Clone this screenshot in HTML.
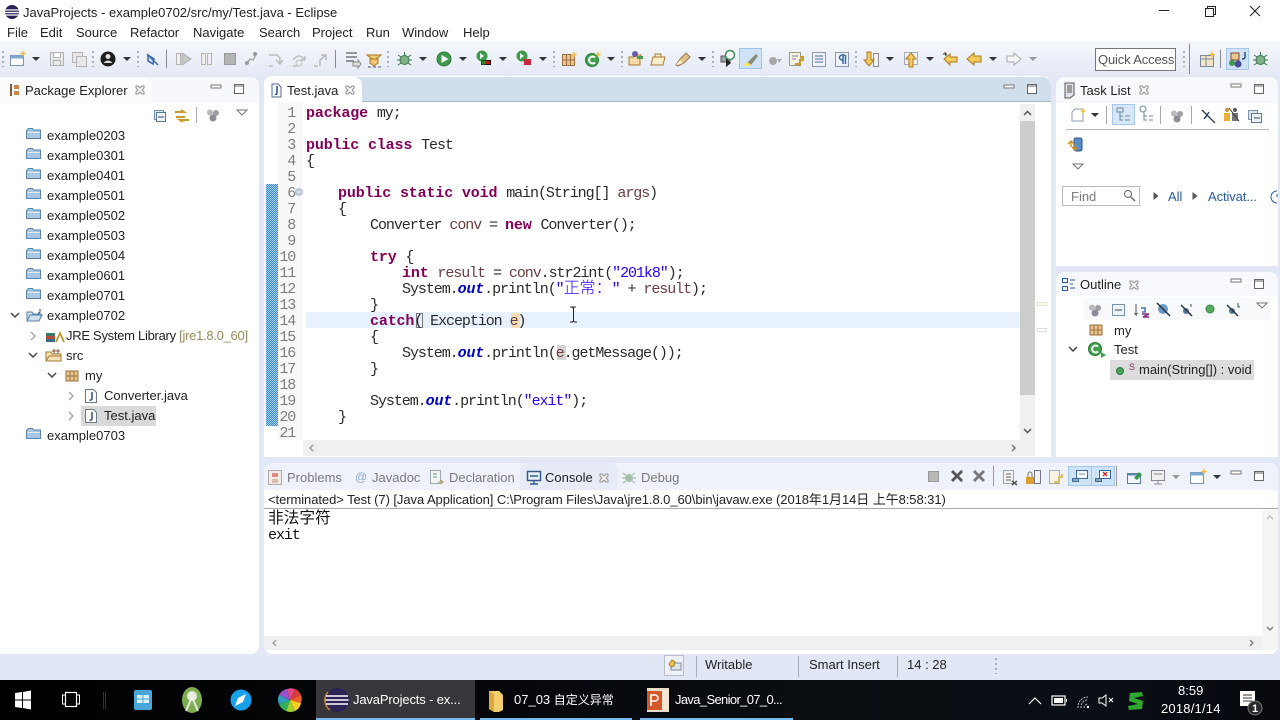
<!DOCTYPE html>
<html><head><meta charset="utf-8"><title>Eclipse</title>
<style>
html,body{margin:0;padding:0}
body{width:1280px;height:720px;overflow:hidden;position:relative;background:#e1e7f5;font:13px/20px "Liberation Sans","Noto Sans CJK SC",sans-serif;color:#222}
div{position:absolute}
.t{white-space:nowrap;margin-top:1px}
.g{color:#7a7a7a}
.w{color:#fff}
.c{font:15px/16px "Liberation Mono","Noto Sans CJK SC",monospace;letter-spacing:-1.06px;white-space:pre;color:#2a2a2a;margin-top:1px}
.c b{color:#7f0055;letter-spacing:-.15px}
.c i{color:#0000c0;font-weight:bold;letter-spacing:-.15px}
.c s{color:#2a00ff;text-decoration:none}
.c s span{font:16px/0 "Noto Sans CJK SC",sans-serif;letter-spacing:0;font-weight:300}
.c u{color:#6a3e3e;text-decoration:none}
.n{font:15px/16px "Liberation Mono",monospace;color:#7d7d7d;left:270px;width:25px;text-align:right;letter-spacing:-1.2px;margin-top:1px}
svg{position:absolute;left:0;top:0}
</style></head><body>
<div style="left:0;top:0;width:1280px;height:41px;background:#fff"></div>
<div style="left:0;top:41px;width:1280px;height:35px;background:linear-gradient(#f5f7fc,#e4e9f5)"></div>
<div style="left:0;top:77px;width:259px;height:577px;background:#fff;border-radius:0 8px 8px 0"></div>
<div style="left:0;top:77px;width:259px;height:26px;background:#f7f8fc;border-radius:0 8px 0 0"></div>
<div style="left:0;top:77px;width:152px;height:26px;background:#fbfbfe;border-radius:0 8px 0 0"></div>
<div style="left:264px;top:76px;width:787px;height:381px;background:#fff;border-radius:8px 8px 0 0"></div>
<div style="left:264px;top:77px;width:787px;height:24px;background:#d1deec;border-radius:8px 8px 0 0;border-bottom:1px solid #b0b8c2"></div>
<div style="left:264px;top:77px;width:98px;height:25px;background:#fff;border-radius:6px 8px 0 0"></div>
<div style="left:278px;top:102px;width:25px;height:338px;background:#f8f8f8"></div>
<div style="left:306px;top:312px;width:714px;height:16px;background:#e8f2fe"></div>
<div style="left:1020px;top:104px;width:15px;height:336px;background:#f0f0f0"></div>
<div style="left:1020px;top:121px;width:15px;height:274px;background:#cdcdcd"></div>
<div style="left:303px;top:440px;width:732px;height:16px;background:#f0f0f0"></div>
<div style="left:1056px;top:77px;width:222px;height:189px;background:#fff;border-radius:8px 8px 0 0"></div>
<div style="left:1056px;top:77px;width:222px;height:26px;background:#f8f9fc;border-radius:8px 8px 0 0"></div>
<div style="left:1056px;top:272px;width:222px;height:185px;background:#fff;border-radius:8px 8px 0 0"></div>
<div style="left:1056px;top:272px;width:222px;height:24px;background:#f8f9fc;border-radius:8px 8px 0 0"></div>
<div style="left:1084px;top:298px;width:186px;height:22px;background:#f8f9fb"></div>
<div style="left:1110px;top:360px;width:144px;height:20px;background:#dcdcdc"></div>
<div style="left:264px;top:463px;width:1014px;height:191px;background:#fff;border-radius:8px 8px 8px 8px"></div>
<div style="left:264px;top:463px;width:1014px;height:27px;background:#eff2fa;border-radius:8px 8px 0 0"></div>
<div style="left:520px;top:463px;width:98px;height:27px;background:#e6ebf5;border-radius:8px 8px 0 0"></div>
<div style="left:264px;top:508px;width:1014px;height:1px;background:#a8a8a8"></div>
<div style="left:1262px;top:510px;width:16px;height:140px;background:#f5f5f5"></div>
<div style="left:264px;top:636px;width:998px;height:14px;background:#f0f0f0"></div>
<div style="left:81px;top:406px;width:75px;height:20px;background:#d9d9d9"></div>
<div style="left:0;top:680px;width:1280px;height:40px;background:linear-gradient(90deg,#000 0,#05070b 40%,#0b0f14 70%,#0a0f16 85%,#06080d 100%)"></div>
<div style="left:316px;top:680px;width:159px;height:40px;background:#37373b"></div>
<div style="left:316px;top:718px;width:159px;height:2px;background:#76b9ed"></div>
<div style="left:480px;top:718px;width:152px;height:2px;background:#76b9ed"></div>
<div style="left:640px;top:718px;width:153px;height:2px;background:#76b9ed"></div>

<!-- title and menu -->
<div class="t" style="left:23px;top:2px">JavaProjects - example0702/src/my/Test.java - Eclipse</div>
<div class="t" style="left:7px;top:22px">File</div><div class="t" style="left:40px;top:22px">Edit</div><div class="t" style="left:76px;top:22px">Source</div><div class="t" style="left:130px;top:22px">Refactor</div><div class="t" style="left:193px;top:22px">Navigate</div><div class="t" style="left:259px;top:22px">Search</div><div class="t" style="left:312px;top:22px">Project</div><div class="t" style="left:366px;top:22px">Run</div><div class="t" style="left:402px;top:22px">Window</div><div class="t" style="left:463px;top:22px">Help</div>
<div style="left:1095px;top:48px;width:79px;height:21px;border:1px solid #777;background:#fff;color:#555;text-indent:2px;line-height:21px;white-space:nowrap;letter-spacing:-.15px">Quick Access</div>

<!-- tree -->
<div class="t" style="left:25px;top:80px">Package Explorer</div>
<div class="t" style="left:47px;top:125px">example0203</div>
<div class="t" style="left:47px;top:145px">example0301</div>
<div class="t" style="left:47px;top:165px">example0401</div>
<div class="t" style="left:47px;top:185px">example0501</div>
<div class="t" style="left:47px;top:205px">example0502</div>
<div class="t" style="left:47px;top:225px">example0503</div>
<div class="t" style="left:47px;top:245px">example0504</div>
<div class="t" style="left:47px;top:265px">example0601</div>
<div class="t" style="left:47px;top:285px">example0701</div>
<div class="t" style="left:47px;top:305px">example0702</div>
<div class="t" style="left:66px;top:325px;letter-spacing:-.28px">JRE System Library <span style="color:#968b5c">[jre1.8.0_60]</span></div>
<div class="t" style="left:66px;top:345px">src</div>
<div class="t" style="left:85px;top:365px">my</div>
<div class="t" style="left:104px;top:385px">Converter.java</div>
<div class="t" style="left:104px;top:405px">Test.java</div>
<div class="t" style="left:47px;top:425px">example0703</div>

<!-- editor -->
<div class="t" style="left:287px;top:80px">Test.java</div>
<div class="n" style="top:105px">1</div><div class="n" style="top:121px">2</div><div class="n" style="top:137px">3</div><div class="n" style="top:153px">4</div><div class="n" style="top:169px">5</div><div class="n" style="top:185px">6</div><div class="n" style="top:201px">7</div><div class="n" style="top:217px">8</div><div class="n" style="top:233px">9</div><div class="n" style="top:249px">10</div><div class="n" style="top:265px">11</div><div class="n" style="top:281px">12</div><div class="n" style="top:297px">13</div><div class="n" style="top:313px">14</div><div class="n" style="top:329px">15</div><div class="n" style="top:345px">16</div><div class="n" style="top:361px">17</div><div class="n" style="top:377px">18</div><div class="n" style="top:393px">19</div><div class="n" style="top:409px">20</div><div class="n" style="top:425px">21</div>
<div style="left:511px;top:313px;width:9px;height:15px;background:#f6deb6"></div>
<div style="left:557px;top:345px;width:9px;height:15px;background:#d4d4d4"></div>
<div style="left:416px;top:313px;width:7px;height:15px;border:1px solid #777;box-sizing:border-box"></div>
<div class="c" style="left:306px;top:105px"><b>package </b>my;</div>
<div class="c" style="left:306px;top:137px"><b>public class </b>Test</div>
<div class="c" style="left:306px;top:153px">{</div>
<div class="c" style="left:338px;top:185px"><b>public static void </b>main(String[] <u>args</u>)</div>
<div class="c" style="left:338px;top:201px">{</div>
<div class="c" style="left:370px;top:217px">Converter <u>conv</u> = <b>new </b>Converter();</div>
<div class="c" style="left:370px;top:249px"><b>try </b>{</div>
<div class="c" style="left:402px;top:265px"><b>int </b><u>result</u> = <u>conv</u>.str2int(<s>"201k8"</s>);</div>
<div class="c" style="left:402px;top:281px">System.<i>out</i>.println(<s>"<span>正常：</span>"</s> + <u>result</u>);</div>
<div class="c" style="left:370px;top:297px">}</div>
<div class="c" style="left:370px;top:313px"><b>catch</b>( Exception <u>e</u>)</div>
<div class="c" style="left:370px;top:329px">{</div>
<div class="c" style="left:402px;top:345px">System.<i>out</i>.println(<u>e</u>.getMessage());</div>
<div class="c" style="left:370px;top:361px">}</div>
<div class="c" style="left:370px;top:393px">System.<i>out</i>.println(<s>"exit"</s>);</div>
<div class="c" style="left:338px;top:409px">}</div>

<!-- right panels -->
<div class="t" style="left:1080px;top:80px">Task List</div>
<div class="t g" style="left:1071px;top:186px">Find</div>
<div class="t" style="left:1168px;top:186px;color:#2a5a9c">All</div>
<div class="t" style="left:1208px;top:186px;color:#2a5a9c;letter-spacing:-.1px">Activat...</div>
<div class="t" style="left:1080px;top:274px">Outline</div>
<div class="t" style="left:1114px;top:320px">my</div>
<div class="t" style="left:1114px;top:339px">Test</div>
<div class="t" style="left:1139px;top:359px">main(String[]) : void</div>
<div class="t" style="left:1129px;top:356px;font-size:9px;color:#8a2a5a">S</div>

<!-- console -->
<div class="t g" style="left:287px;top:467px">Problems</div>
<div class="t" style="left:355px;top:466px;color:#8fa8c8;font-size:12px">@</div>
<div class="t g" style="left:372px;top:467px">Javadoc</div>
<div class="t g" style="left:449px;top:467px">Declaration</div>
<div class="t" style="left:545px;top:467px">Console</div>
<div class="t g" style="left:641px;top:467px">Debug</div>
<div class="t" style="left:268px;top:489px;letter-spacing:-.07px">&lt;terminated&gt; Test (7) [Java Application] C:\Program Files\Java\jre1.8.0_60\bin\javaw.exe (2018年1月14日 上午8:58:31)</div>
<div class="t" style="left:268px;top:507px;margin:0;font:15.7px/19px 'Noto Sans CJK SC',sans-serif;color:#111">非法字符</div>
<div class="c" style="left:268px;top:527px;color:#111">exit</div>

<!-- status -->
<div class="t" style="left:705px;top:654px">Writable</div>
<div class="t" style="left:809px;top:654px">Smart Insert</div>
<div class="t" style="left:907px;top:654px">14 : 28</div>

<!-- taskbar text -->
<div class="t w" style="left:353px;top:689px;letter-spacing:-.15px">JavaProjects - ex...</div>
<div class="t w" style="left:514px;top:689px">07_03 <span style="font-size:12px">自定义异常</span></div>
<div class="t w" style="left:675px;top:689px;letter-spacing:-.65px">Java_Senior_07_0...</div>
<div class="t w" style="left:1178px;top:680px">8:59</div>
<div class="t w" style="left:1161px;top:698px;letter-spacing:.2px">2018/1/14</div>

<svg width="1280" height="720" viewBox="0 0 1280 720" fill="none">
<defs>
<pattern id="dith" width="2" height="2" patternUnits="userSpaceOnUse"><rect width="2" height="2" fill="#3f8ac8"/><rect width="1" height="1" fill="#a8d0ea"/><rect x="1" y="1" width="1" height="1" fill="#a8d0ea"/></pattern>
<symbol id="arr" overflow="visible"><path d="M-4 -2h8l-4 4z" fill="#333"/></symbol>
<symbol id="arrg" overflow="visible"><path d="M-4 -2h8l-4 4z" fill="#999"/></symbol>
<symbol id="x" overflow="visible"><path d="M-4 -4l2 0 2 2 2-2 2 0 0 2-2 2 2 2 0 2-2 0-2-2-2 2-2 0 0-2 2-2-2-2z" stroke="#8d8d8d" fill="#fff"/></symbol>
<symbol id="min" overflow="visible"><rect x="-5" y="-2" width="10" height="3" stroke="#777" fill="#fff"/></symbol>
<symbol id="max" overflow="visible"><rect x="-4.5" y="-4.5" width="9" height="9" stroke="#666" fill="#fff"/><path d="M-4.5 -3h9" stroke="#666"/></symbol>
<symbol id="prj" overflow="visible"><path d="M-7.5 -4.5l2-2h4l1 1.5h7v8.500h-14z" fill="#a9c7e4" stroke="#5b83a8"/><path d="M-6.5 -2.5h12" stroke="#e3eef8"/></symbol>
<symbol id="jf" overflow="visible"><path d="M-5.5 -6.5h8l3 3v10h-11z" fill="#fdfdf6" stroke="#6c7a88"/><path d="M1 -4v6.500q0 2-2.500 1.500" stroke="#2a4f8a" stroke-width="1.500"/></symbol>
<symbol id="pkg" overflow="visible"><rect x="-6" y="-5" width="12" height="10" fill="#e7c68f" stroke="#9d6f3f"/><path d="M-2 -5v10M2 -5v10M-6 0h12" stroke="#9d6f3f"/></symbol>
<symbol id="grip" overflow="visible"><path d="M0 -8v16" stroke="#9a9a9a" stroke-dasharray="2 3" stroke-width="1.500"/></symbol>
<symbol id="tri" overflow="visible"><path d="M-1.500 -4l5 4-5 4z" fill="#555"/></symbol>
<symbol id="chev" overflow="visible"><path d="M-4 -2l4 4 4-4" stroke="#444" stroke-width="1.500"/></symbol>
<symbol id="chevr" overflow="visible"><path d="M-2 -4l4 4-4 4" stroke="#aaa" stroke-width="1.500"/></symbol>
<symbol id="ddn" overflow="visible"><path d="M-5 -3h10l-5 5z" stroke="#777" fill="#fff"/></symbol>
<symbol id="run" overflow="visible"><circle r="7" fill="#3f9a4d" stroke="#2c7c3a"/><path d="M-2.500 -4l7 4-7 4z" fill="#fff"/></symbol>
<symbol id="cl" overflow="visible"><circle r="6.500" fill="#3fa14d" stroke="#247a34"/><path d="M3 -2.500a3.500 3.500 0 1 0 0 5" stroke="#fff" stroke-width="2"/></symbol>
<symbol id="gray" overflow="visible"><circle cx="-3" cy="-2.500" r="3" fill="#b9b9b9"/><circle cx="3" cy="-2" r="3" fill="#a0a0a0"/><circle cy="3" r="3.500" fill="#8c8c9a"/></symbol>
</defs>
<!-- eclipse title icon -->
<circle cx="12" cy="12" r="7" fill="#2c2255"/><path d="M5 10h14M5 12.500h14M5.500 15h13" stroke="#fff" stroke-width="1.200"/>
<!-- window controls -->
<path d="M1159 10.500h10" stroke="#222"/><rect x="1205.500" y="8.500" width="8" height="8" stroke="#222"/><path d="M1207.500 8.500v-2h8v8h-2" stroke="#222"/><path d="M1250 6l10 10M1260 6l-10 10" stroke="#222" stroke-width="1.100"/>
<!-- main toolbar -->
<use href="#grip" x="3" y="59"/><use href="#grip" x="93" y="59"/><use href="#grip" x="138" y="59"/><use href="#grip" x="388" y="59"/><use href="#grip" x="554" y="59"/><use href="#grip" x="622" y="59"/><use href="#grip" x="713" y="59"/><use href="#grip" x="856" y="59"/><use href="#grip" x="1184" y="59"/>
<rect x="10.500" y="55.500" width="13" height="10" fill="#fff" stroke="#7a96b0"/><path d="M10.500 55.500h13v3h-13z" fill="#7fa8cf"/><path d="M23 50l1 2.500 2.500 1-2.500 1-1 2.500-1-2.500-2.500-1 2.500-1z" fill="#f2c14e"/>
<use href="#arr" x="36" y="59"/>
<rect x="50.500" y="52.500" width="13" height="13" fill="#e8e8e8" stroke="#b2b2b2"/><rect x="53.500" y="52.500" width="7" height="5" fill="#fff" stroke="#b2b2b2"/><rect x="53.500" y="60.500" width="7" height="5" stroke="#b2b2b2"/>
<rect x="72.500" y="52.500" width="10" height="10" fill="#e8e8e8" stroke="#b2b2b2"/><rect x="76.500" y="56.500" width="10" height="10" fill="#e8e8e8" stroke="#b2b2b2"/>
<circle cx="108" cy="59" r="7.500" fill="#1c1c1c"/><circle cx="108" cy="56.500" r="2.500" fill="#ddd"/><path d="M103.500 63q4.500-5 9 0z" fill="#ddd"/>
<use href="#arr" x="127" y="59"/>
<path d="M148 55l6 4-1 5-5-3zM147 54l11 11" stroke="#3a66a8" stroke-width="1.500" fill="#cfe0f2"/>
<path d="M166.500 50v18M335.500 50v18M1189.500 44v30M1220.500 50v18" stroke="#8a8a8a"/>
<rect x="176.500" y="53.500" width="4" height="11" stroke="#b5b5b5" fill="#eee"/><path d="M182 53l9 6-9 6z" fill="#c8c8c8" stroke="#aaa"/>
<rect x="201.500" y="53.500" width="4" height="11" stroke="#b5b5b5" fill="#eee"/><rect x="207.500" y="53.500" width="4" height="11" stroke="#b5b5b5" fill="#eee"/>
<rect x="224.500" y="53.500" width="11" height="11" fill="#b5b5b5" stroke="#999"/>
<path d="M246 65l4-6 3 1 4-7" stroke="#aaa" stroke-width="1.500"/><circle cx="247" cy="63" r="2" fill="#999"/><circle cx="255" cy="54" r="2" fill="#999"/>
<path d="M269 55h8l3 3v5M276 60l4 4 3-4M269 66h4" stroke="#bbb" stroke-width="1.500"/>
<path d="M293 60q6-8 12 0M305 60v-4M305 60h-4M293 66h4" stroke="#bbb" stroke-width="1.500"/><circle cx="299" cy="63" r="3" stroke="#bbb"/>
<path d="M314 66h4M320 66v-6l6-5M326 55v5M326 55h-5" stroke="#bbb" stroke-width="1.500"/>
<path d="M346 53h11M346 57h11M346 61h8" stroke="#777" stroke-width="1.500"/><path d="M353 62h5v-2l3 4-3 4v-2h-5z" fill="#ddd" stroke="#888"/>
<path d="M367 55h14l-5 4h-4zM370 59h8v4l-4 3-4-3z" fill="#f2c872" stroke="#a8781f"/><path d="M368 67h14" stroke="#556" stroke-dasharray="3 2"/>
<circle cx="404.500" cy="60" r="4.500" fill="#7fb08a" stroke="#3a7a4a"/><path d="M398 55l3 2M411 55l-3 2M397 60h3M409 60h3M398 65l3-2M411 65l-3-2M404.500 52v3" stroke="#3a6a4a"/>
<use href="#arr" x="423" y="59"/>
<use href="#run" x="444" y="59"/><use href="#arr" x="463" y="59"/>
<circle cx="482" cy="56" r="5.500" fill="#3f9a4d"/><path d="M480 53l4 3-4 3z" fill="#fff"/><rect x="481.500" y="60.500" width="9" height="4" fill="#c11" stroke="#111"/><rect x="481.500" y="60.500" width="4" height="4" fill="#2a8a2a"/><use href="#arr" x="503" y="59"/>
<circle cx="522" cy="56" r="5.500" fill="#3f9a4d"/><path d="M520 53l4 3-4 3z" fill="#fff"/><rect x="524" y="59" width="7" height="6" fill="#c9283e"/><use href="#arr" x="543" y="59"/>
<rect x="562.500" y="54.500" width="12" height="11" fill="#e7c68f" stroke="#9d6f3f"/><path d="M566.500 54.500v11M570.500 54.500v11M562.500 60h12" stroke="#9d6f3f"/><path d="M574 51l1 2.500 2.500 1-2.500 1-1 2.500-1-2.500-2.500-1 2.500-1z" fill="#f2c14e"/>
<use href="#cl" x="592" y="60"/><path d="M598 51l1 2.500 2.500 1-2.500 1-1 2.500-1-2.500-2.500-1 2.500-1z" fill="#f2c14e"/><use href="#arr" x="611" y="59"/>
<path d="M629 65v-8h5l1-2h6l-1 2v8z" fill="#f5d9a0" stroke="#a57a30"/><circle cx="635" cy="54" r="3" fill="#6a5aa8"/><rect x="637" y="56" width="6" height="3" fill="#4a9a5a"/>
<path d="M651 65l2-8h12l-2 8zM655 57v-3h6v3" fill="#fbeccc" stroke="#a57a30"/>
<path d="M676 65l4-6 6-6 4 4-6 6-6 3z" fill="#e6c28a" stroke="#8c7a5a"/><path d="M676 65l4-5 3 3z" fill="#fff3c4"/>
<use href="#arr" x="702" y="59"/>
<rect x="721" y="56" width="9" height="6" fill="#9aa5a8" stroke="#555"/><path d="M726 58v9l5-4z" fill="#222"/><circle cx="730" cy="55" r="4.500" fill="#fff" stroke="#3a8a5a" stroke-width="1.500"/>
<rect x="739.500" y="48.500" width="22" height="20" fill="#cfe3f8" stroke="#9cc4ea"/><path d="M746 64l10-10 2 2-7 9h-6z" fill="#8a8a7a"/><path d="M746 62l5 2-2 2h-5z" fill="#f2e65c"/>
<circle cx="773" cy="61" r="4" fill="#a8a8a8"/><path d="M777 59h5l-3 4" fill="#aaa"/>
<rect x="789.500" y="52.500" width="11" height="13" fill="#f6f2e4" stroke="#9a9a8a"/><path d="M792 56h6M792 59h4" stroke="#889"/><path d="M795 64h5v-4h3v-3l-3 0" stroke="#c89a2a" stroke-width="2"/>
<rect x="812.500" y="52.500" width="13" height="14" fill="#f0f4fa" stroke="#8a9ab0"/><path d="M815 56h8M815 59h8M815 62h8" stroke="#4a6a9a"/>
<rect x="835.500" y="52.500" width="13" height="14" fill="#eef3fa" stroke="#8a9ab0"/><path d="M843 55v9M845.500 55v9M845 55h-3a2.500 2.500 0 0 0 0 5h1" stroke="#3a6a9a" stroke-width="1.500"/>
<rect x="873.500" y="53.500" width="5" height="13" fill="#f2f2f2" stroke="#889"/><path d="M867 52v8h-3l5 6 5-6h-3v-8z" fill="#f5cb5c" stroke="#a87a1f"/><use href="#arr" x="890" y="59"/>
<rect x="904.500" y="52.500" width="13" height="12" fill="#f2f2f2" stroke="#aab"/><path d="M909 67v-8h-3l5-6 5 6h-3v8z" fill="#f5cb5c" stroke="#a87a1f"/><use href="#arr" x="930" y="59"/>
<path d="M944 59l6-5v3h7v5h-7v3z" fill="#f5cb5c" stroke="#a87a1f"/><path d="M945 52l1 4M943 54l4 0" stroke="#333"/>
<path d="M967 59l7-6v3h7v6h-7v3z" fill="#f5cb5c" stroke="#a87a1f"/><use href="#arr" x="993" y="59"/>
<path d="M1021 59l-7-6v3h-7v6h7v3z" fill="#f6f6f8" stroke="#aaa"/><use href="#arrg" x="1033" y="59"/>
<rect x="1200.500" y="55.500" width="13" height="11" fill="#f2e5c6" stroke="#7a8aa0"/><path d="M1200.500 59h13M1206 55.500v11" stroke="#7a8aa0"/><path d="M1212 51l1 2.500 2.500 1-2.500 1-1 2.500-1-2.500-2.500-1 2.500-1z" fill="#f2c14e"/>
<rect x="1226.500" y="48.500" width="22" height="21" fill="#cfe3f8" stroke="#a8c8ea"/><rect x="1231" y="53" width="8" height="7" fill="#e7c68f" stroke="#8a4a2a"/><circle cx="1232" cy="63" r="3" fill="#3f9a4d"/><circle cx="1238" cy="64" r="3.500" fill="#4a4a9a"/><path d="M1245 52v5q0 2-3 2" stroke="#2a4f8a" stroke-width="1.500"/>
<circle cx="1260.500" cy="60" r="4.500" fill="#7fb08a" stroke="#3a7a4a"/><path d="M1254 55l3 2M1267 55l-3 2M1253 60h3M1265 60h3M1254 65l3-2M1267 65l-3-2M1260.500 52v3" stroke="#3a6a4a"/>

<!-- package explorer -->
<rect x="10" y="84" width="2" height="12" fill="#8a5a3a"/><rect x="14" y="85" width="5" height="4" fill="#c88a4a"/><rect x="14" y="91" width="5" height="4" fill="#c88a4a"/>
<use href="#x" x="140" y="90"/><use href="#min" x="216" y="87"/><use href="#max" x="239" y="89"/>
<rect x="154.500" y="110.500" width="9" height="9" fill="#dbe6ef" stroke="#7a93a8"/><rect x="156.500" y="112.500" width="9" height="9" fill="#eef4fa" stroke="#5a7890"/><path d="M158 117h6" stroke="#345"/>
<path d="M175 112h9l-3-2M189 120h-9l3 2" stroke="#c89a2a" stroke-width="2"/><path d="M176 117h9" stroke="#c89a2a" stroke-width="2"/>
<path d="M196.500 107v16" stroke="#aaa"/><use href="#gray" x="213" y="115"/><use href="#ddn" x="242" y="113"/>
<use href="#prj" x="34" y="135"/><use href="#prj" x="34" y="155"/><use href="#prj" x="34" y="175"/><use href="#prj" x="34" y="195"/><use href="#prj" x="34" y="215"/><use href="#prj" x="34" y="235"/><use href="#prj" x="34" y="255"/><use href="#prj" x="34" y="275"/><use href="#prj" x="34" y="295"/><use href="#prj" x="34" y="435"/>
<use href="#chev" x="15" y="315"/>
<path d="M27 321v-9h5l1 2h8v2M27 321l3-6h12l-3 6z" fill="#cfe0f2" stroke="#5b83a8"/><path d="M40 309v3q0 1-2 1" stroke="#2a4f8a"/>
<use href="#chevr" x="33" y="336"/><rect x="46" y="333" width="9" height="3" fill="#3a7a6a"/><rect x="46" y="336" width="9" height="3" fill="#b04a3a"/><rect x="46" y="339" width="9" height="3" fill="#3a6a8a"/><path d="M56 342l4-9 4 9" stroke="#c8962a" stroke-width="1.800"/>
<use href="#chev" x="33" y="355"/><path d="M46 361v-9h5l1 2h9v7zM46 361l3-5h12" fill="#f7e2b8" stroke="#a57a30"/><path d="M54 349v5M58 349v5M52 351h8" stroke="#8a5a3a"/>
<use href="#chev" x="52" y="375"/><use href="#pkg" x="72" y="376"/>
<use href="#chevr" x="71" y="396"/><use href="#jf" x="91" y="396"/><use href="#chevr" x="71" y="416"/><use href="#jf" x="91" y="416"/>

<!-- editor chrome -->
<g transform="translate(-5 0)"><path d="M277 84h6l3 3v10h-9z" fill="#f6f8fc" stroke="#5a6a88"/><path d="M282 86v7q0 2-2 1" stroke="#2a4f8a" stroke-width="1.500"/></g>
<use href="#x" x="350" y="90"/><use href="#min" x="1009" y="87"/><use href="#max" x="1032" y="89"/>
<rect x="266" y="184" width="12" height="242" fill="url(#dith)"/>
<circle cx="299" cy="192" r="4" fill="#b9c7d6"/><path d="M297 192h4" stroke="#fff"/>
<path d="M1024 115l3.500-3.500 3.500 3.500" stroke="#555" stroke-width="1.500"/>
<path d="M1024 429l3.500 3.500 3.500-3.500" stroke="#555" stroke-width="1.500"/>
<path d="M313 445l-3 3 3 3" stroke="#999" stroke-width="1.500"/><path d="M1012 445l3 3-3 3" stroke="#777" stroke-width="1.500"/>
<rect x="1037.500" y="302.500" width="9" height="3" stroke="#eee0c8"/><rect x="1037.500" y="328.500" width="9" height="3" stroke="#ddd"/>
<path d="M570 307h2.500l.5 1 .5-1h2.500M573.500 308v13M570 322h2.500l1-1 1 1h2.500" stroke="#222"/>

<!-- task list -->
<path d="M1065 83h9v12l-4 3h-5z" fill="#dfe2e8" stroke="#555"/><path d="M1067 86h5M1067 88h5M1067 90h5M1067 92h5" stroke="#555"/>
<use href="#x" x="1144" y="90"/><use href="#min" x="1236" y="86"/><use href="#max" x="1259" y="89"/>
<path d="M1072 112l3-3h8v12h-11z" fill="#fff" stroke="#8a9ab0"/><path d="M1083 108l1 2 2 1-2 1-1 2-1-2-2-1 2-1z" fill="#f2c14e"/>
<use href="#arr" x="1095" y="115"/><path d="M1106.500 106v18M1160.500 106v18M1191.500 106v18" stroke="#aaa"/>
<rect x="1112.500" y="104.500" width="22" height="20" fill="#d5e7f8" stroke="#a8c8ea"/>
<path d="M1117 108h6v4h-6zM1120 112v8h3M1120 116h3M1125 116h5M1125 120h5" stroke="#6a8a9a"/>
<circle cx="1143" cy="109" r="3" stroke="#6a8a9a"/><path d="M1144 112v8h3M1144 116h3M1149 116h4M1149 120h4" stroke="#6a8a9a"/>
<use href="#gray" x="1177" y="116"/>
<path d="M1202 110l13 13M1206 116l-2 3M1209 112l-4 6" stroke="#2a3a5a" stroke-width="1.300"/>
<circle cx="1227" cy="110" r="2" fill="#c8962a"/><rect x="1224" y="113" width="6" height="8" fill="#e8b23a"/><circle cx="1235" cy="110" r="2" fill="#555"/><rect x="1232" y="113" width="6" height="8" fill="#777"/><path d="M1229 108l10 13" stroke="#333"/>
<rect x="1248.500" y="110.500" width="9" height="9" fill="#dbe6ef" stroke="#7a93a8"/><rect x="1251.500" y="113.500" width="10" height="9" fill="#eef4fa" stroke="#5a7890"/><path d="M1254 118h6" stroke="#345"/>
<path d="M1066 129.500h203" stroke="#b8b8b8"/>
<rect x="1074" y="138" width="8" height="13" rx="2" fill="#5a8ac8" stroke="#2a4f8a"/><path d="M1068 144l3-3 3 3M1078 147l-3 3-3-3M1071 141v6M1075 150v-6" stroke="#c8962a" stroke-width="1.500"/>
<use href="#ddn" x="1078" y="167"/>
<rect x="1062.500" y="186.500" width="77" height="19" fill="none" stroke="#bbb"/>
<circle cx="1128" cy="194" r="3.500" stroke="#666"/><path d="M1131 197l4 4" stroke="#666" stroke-width="1.500"/>
<use href="#tri" x="1155" y="196"/><use href="#tri" x="1194" y="196"/><path d="M1277 191a6 6 0 0 0 0 12M1277 194v3" stroke="#2a5a9c"/>

<!-- outline -->
<path d="M1062.500 278.500h5v4h-5zM1062.500 286.500h5v4h-5zM1070 280h5M1070 288h5M1070 284h3" stroke="#2a5a9c"/><use href="#x" x="1134" y="285"/><use href="#min" x="1236" y="281"/><use href="#max" x="1259" y="284"/>
<use href="#gray" x="1095" y="310"/>
<rect x="1112.500" y="304.500" width="12" height="11" fill="#eef3f8" stroke="#7a93a8"/><path d="M1115 310h7" stroke="#345"/>
<path d="M1136 304v11l-1.500-2M1136 315l1.500-2" stroke="#555"/><path d="M1141 308h4v4h-3" stroke="#2a5aa0" stroke-width="1.300"/><path d="M1142 314h7l-6 3h6" stroke="#8a2a7a" stroke-width="1.500"/>
<circle cx="1163" cy="309" r="5" fill="#6a9ac8"/><path d="M1157 303l13 13" stroke="#234" stroke-width="1.500"/>
<circle cx="1186" cy="311" r="3" fill="#5a7a9a"/><path d="M1181 305l11 11" stroke="#234" stroke-width="1.500"/><path d="M1191 304v3" stroke="#2a4f8a"/>
<circle cx="1210" cy="309" r="4" fill="#5aa85a" stroke="#3a8a4a"/>
<circle cx="1232" cy="311" r="3" fill="#5a7a9a"/><path d="M1227 305l11 11" stroke="#234" stroke-width="1.500"/><path d="M1238 303v4h2" stroke="#2a6a4a"/>
<use href="#ddn" x="1262" y="306"/>
<use href="#pkg" x="1096" y="330"/>
<use href="#chev" x="1073" y="349"/><use href="#cl" x="1095" y="349"/><path d="M1101 352l5 3-5 3z" fill="#3fa14d"/>
<circle cx="1120" cy="371" r="3.500" fill="#4aa05a" stroke="#2a7a3a"/>

<!-- console -->
<rect x="268.500" y="470.500" width="13" height="14" fill="#f2ece8" stroke="#aaa"/><rect x="272" y="473" width="6" height="4" fill="#d88"/><rect x="272" y="479" width="6" height="4" fill="#dba"/>
<rect x="430.500" y="470.500" width="10" height="13" fill="#f2f4f8" stroke="#9aa"/><path d="M433 474h4M433 477h4" stroke="#7a9a7a"/><path d="M438 482h5l-2-2M443 482l-2 2" stroke="#b8a050"/>
<rect x="527.500" y="471.500" width="13" height="9" fill="#e8f0f8" stroke="#345a8a" stroke-width="1.500"/><path d="M530 484h8M534 481v3M530 476h8" stroke="#345a8a" stroke-width="1.400"/>
<use href="#x" x="604" y="478"/>
<circle cx="629" cy="478" r="4" fill="#a8c0ac"/><path d="M623 473l3 2M635 473l-3 2M622 478h3M633 478h3M623 483l3-2M635 483l-3-2" stroke="#9ab09e"/>
<rect x="928.500" y="471.500" width="10" height="10" fill="#b8b8b8" stroke="#999"/>
<path d="M951 472l2-2 4 4 4-4 2 2-4 4 4 4-2 2-4-4-4 4-2-2 4-4z" fill="#555"/>
<path d="M973 472l2-2 4 4 4-4 2 2-4 4 4 4-2 2-4-4-4 4-2-2 4-4z" fill="#777"/>
<path d="M993.500 466v20M1116.500 466v20" stroke="#999"/>
<rect x="1003.500" y="470.500" width="10" height="13" fill="#f2f2ee" stroke="#9aa"/><path d="M1006 474h5M1006 477h5M1006 480h5" stroke="#667"/><path d="M1012 481l5 4M1017 481l-5 4" stroke="#555" stroke-width="1.500"/>
<rect x="1026" y="477" width="8" height="7" fill="#d8a02a"/><path d="M1028 477v-3a2 2 0 0 1 4 0v3" stroke="#777"/><rect x="1034.500" y="470.500" width="6" height="13" fill="#f2f2f2" stroke="#778"/>
<rect x="1049.500" y="470.500" width="10" height="13" fill="#f6f2e4" stroke="#aab"/><path d="M1054 482h5v-5h3v-3" stroke="#d8c060" stroke-width="2"/>
<rect x="1068.500" y="466.500" width="23" height="19" fill="#cfe3f8" stroke="#a8c8ea"/><rect x="1091.500" y="466.500" width="23" height="19" fill="#cfe3f8" stroke="#a8c8ea"/>
<rect x="1076.500" y="470.500" width="11" height="8" fill="#fff" stroke="#3a6a9a"/><path d="M1079 474h6" stroke="#6a8aa0"/><rect x="1072.500" y="478.500" width="6" height="3" fill="#8ab" stroke="#3a6a9a"/>
<rect x="1099.500" y="470.500" width="11" height="8" fill="#fff" stroke="#3a6a9a"/><path d="M1103 472l4 4M1107 472l-4 4" stroke="#c22" stroke-width="1.300"/><rect x="1095.500" y="478.500" width="6" height="3" fill="#8ab" stroke="#3a6a9a"/>
<rect x="1127.500" y="473.500" width="13" height="10" fill="#f4f7fa" stroke="#5a7a9a"/><path d="M1127.500 473.500h13v2h-13z" fill="#5a8ab0"/><path d="M1134 478l5-6 3 3-5 5z" fill="#3a9a4a"/>
<rect x="1151.500" y="470.500" width="13" height="10" fill="#f0f0f0" stroke="#8a8a8a"/><path d="M1154 474h8M1158 481v3M1154 484h8" stroke="#8a8a8a"/><use href="#arrg" x="1176" y="477"/>
<rect x="1190.500" y="472.500" width="13" height="11" fill="#fff" stroke="#7a96b0"/><path d="M1190.500 472.500h13v3h-13z" fill="#7fa8cf"/><path d="M1204 468l1 2.500 2.500 1-2.500 1-1 2.500-1-2.500-2.500-1 2.500-1z" fill="#f2c14e"/><use href="#arr" x="1217" y="477"/>
<use href="#min" x="1236" y="473"/><use href="#max" x="1259" y="476"/>
<path d="M1267 519l3-3 3 3" stroke="#bbb" stroke-width="1.300"/><path d="M1267 627l3 3 3-3" stroke="#777" stroke-width="1.300"/>
<path d="M276 640l-3 3 3 3" stroke="#999" stroke-width="1.300"/><path d="M1250 640l3 3-3 3" stroke="#777" stroke-width="1.300"/>

<!-- status -->
<rect x="664.500" y="655.500" width="19" height="20" fill="#eef1f8" stroke="#b8bcc6"/>
<rect x="671" y="663" width="10" height="7" fill="#dfe6ee" stroke="#7a8aa0"/><path d="M669 664l3-4 3 2-1 4-3 1z" fill="#eec05a" stroke="#a87a1f"/>
<path d="M696.500 656v21M798.500 656v21M897.500 656v21" stroke="#a8acb6"/>
<use href="#grip" x="996" y="666"/>

<!-- taskbar icons -->
<path d="M15 693l7-1v7.500h-7zM23 692l8-1.500v9h-8zM15 700.500h7v7.500l-7-1zM23 700.500h8v9l-8-1.500z" fill="#fff"/>
<rect x="65.500" y="692.500" width="11" height="14" stroke="#fff" stroke-width="1.200"/><path d="M65 695h-2.500v9h2.500M77 695h2.500v9h-2.500" stroke="#fff"/>
<path d="M103.500 692v17M105.500 692v17" stroke="#333"/>
<rect x="134" y="690" width="18" height="20" rx="2" fill="#4aa6d8"/><rect x="137" y="695" width="12" height="8" fill="#d8eef8"/><path d="M137 699h12M143 695v8" stroke="#4aa6d8"/>
<ellipse cx="192" cy="700" rx="10" ry="13" fill="#7fae50"/><circle cx="192" cy="696" r="5" fill="#e8eedd"/><path d="M186 711l6-14 6 14" stroke="#eee" stroke-width="1.800"/>
<circle cx="241" cy="700" r="10.500" fill="#19a0ea"/><path d="M235 706l3-8 8-4-3 8z" fill="#fff"/>
<path d="M290 700l-3-11a11 11 0 0 1 8 0z" fill="#e04a8a"/><path d="M290 700l5-11a11 11 0 0 1 6 6z" fill="#d83a3a"/><path d="M290 700l11-5a11 11 0 0 1 0 8z" fill="#f0602a"/><path d="M290 700l11 3a11 11 0 0 1-6 8z" fill="#f5d020"/><path d="M290 700l5 11a11 11 0 0 1-9 0z" fill="#a0d030"/><path d="M290 700l-4 11a11 11 0 0 1-7-7z" fill="#30b060"/><path d="M290 700l-11 4a11 11 0 0 1 0-9z" fill="#30a0c0"/><path d="M290 700l-11-5a11 11 0 0 1 8-6z" fill="#9a50c8"/>
<circle cx="337" cy="700" r="12" fill="#2c2255"/><path d="M328 692a12 12 0 0 0 2 18" stroke="#c8862a" stroke-width="1.500"/><path d="M326 696h22M325.500 700h23M326 704h22" stroke="#fff" stroke-width="1.500"/>
<path d="M489 691h10l4 4v15l-4 2h-5l-5-3z" fill="#f2ce6e"/><path d="M489 691v18l5 3v-18z" fill="#dca83a"/>
<rect x="647" y="688" width="22" height="24" fill="#e8dcc8"/><rect x="647" y="691" width="15" height="19" fill="#d4572a"/><rect x="662" y="690" width="7" height="20" fill="#f4e4d4"/><path d="M651 706v-11h4a3 3 0 0 1 0 6h-4" stroke="#fff" stroke-width="1.600"/>
<path d="M1029 704l6-6 6 6" stroke="#fff" stroke-width="1.200"/>
<rect x="1052" y="696" width="13" height="9" stroke="#fff" stroke-width="1.200"/><rect x="1054" y="698" width="9" height="5" fill="#fff"/><rect x="1066" y="699" width="1" height="3" fill="#fff"/>
<path d="M1078 708a10 10 0 0 1 10-11M1081 708a7 7 0 0 1 7-8M1084 708a4 4 0 0 1 4-4" stroke="#bbb" stroke-dasharray="2 1"/><circle cx="1088" cy="707" r="1.200" fill="#fff"/>
<path d="M1099 698h3l4-3v11l-4-3h-3z" stroke="#fff"/><path d="M1109 698l4 4M1113 698l-4 4" stroke="#fff"/>
<path d="M1130 693l12-1 1 4-9 2 9 3-1 8-13 1-1-4 10-2-9-3z" fill="#2fa82f"/>
<rect x="1240" y="691" width="15" height="15" fill="#fff"/><path d="M1243 695h9M1243 698h9M1243 701h9" stroke="#333"/><circle cx="1255" cy="708" r="7" fill="#2a2a2a" stroke="#777"/>
<text x="1255" y="712" font-family="Liberation Sans" font-size="11" font-weight="bold" fill="#fff" text-anchor="middle">1</text>
</svg>
</body></html>
